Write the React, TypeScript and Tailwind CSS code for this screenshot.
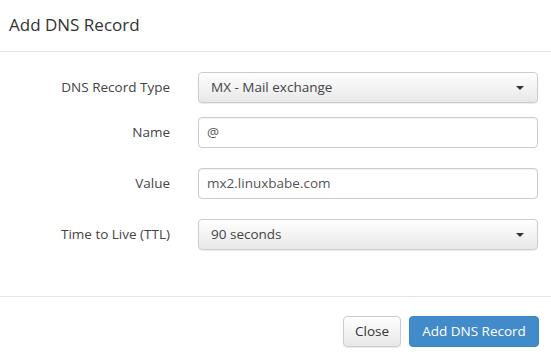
const FONT = "font-['Open_Sans',_'Liberation_Sans',_sans-serif]";

function Caret() {
  return (
    <svg width="8" height="4" viewBox="0 0 8 4" className="shrink-0">
      <path d="M0 0 L8 0 L4 4 Z" fill="#333" />
    </svg>
  );
}

function SelectBox({ value }: { value: string }) {
  return (
    <div className="flex h-[31px] items-center justify-between rounded-[4px] border border-[#ccc] bg-gradient-to-b from-white to-[#e8e8e8] pl-[12px] pr-[13px] text-[13.5px] text-[#444] shadow-[0_1px_1px_rgba(0,0,0,0.08)]">
      <span>{value}</span>
      <Caret />
    </div>
  );
}

function TextBox({ value }: { value: string }) {
  return (
    <div className="flex h-[31px] items-center rounded-[4px] border border-[#ccc] bg-white px-[8px] text-[13.5px] text-[#555] shadow-[inset_0_1px_1px_rgba(0,0,0,0.05)]">
      {value}
    </div>
  );
}

function Row({ label, children, className = "" }: { label: string; children: React.ReactNode; className?: string }) {
  return (
    <div className={`grid grid-cols-[170px_1fr] items-center gap-x-[28px] ${className}`}>
      <label className="text-right text-[13.5px] text-[#444]">{label}</label>
      {children}
    </div>
  );
}

export default function App() {
  return (
    <div className={`h-[360px] w-[551px] overflow-hidden bg-white ${FONT}`}>
      <div className="flex h-[52px] items-center border-b border-[#e5e5e5] px-[9px] pb-[2px]">
        <h4 className="text-[17px] text-[#333]">Add DNS Record</h4>
      </div>
      <div className="pb-[46px] pr-[13px] pt-[20px]">
        <Row label="DNS Record Type">
          <SelectBox value="MX - Mail exchange" />
        </Row>
        <Row label="Name" className="mt-[14px]">
          <TextBox value="@" />
        </Row>
        <Row label="Value" className="mt-[20px]">
          <TextBox value="mx2.linuxbabe.com" />
        </Row>
        <Row label="Time to Live (TTL)" className="mt-[20px]">
          <SelectBox value="90 seconds" />
        </Row>
      </div>
      <div className="flex justify-end gap-[8px] border-t border-[#e5e5e5] pr-[12px] pt-[19px]">
        <button className="h-[31px] w-[58px] rounded-[4px] border border-[#ccc] bg-gradient-to-b from-white to-[#e8e8e8] text-[13.5px] text-[#333] shadow-[0_1px_1px_rgba(0,0,0,0.08)]">
          Close
        </button>
        <button className="h-[31px] w-[130px] rounded-[4px] border border-[#3a85c6] bg-[#428bca] text-[13.5px] text-white">
          Add DNS Record
        </button>
      </div>
    </div>
  );
}
